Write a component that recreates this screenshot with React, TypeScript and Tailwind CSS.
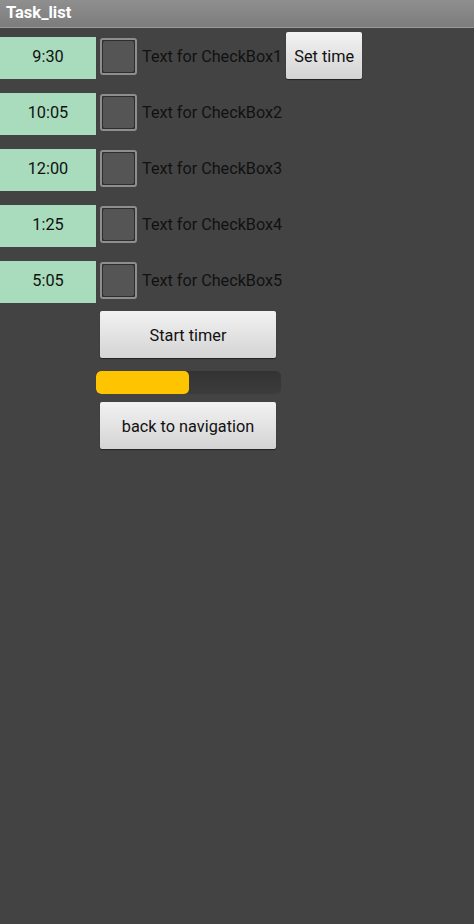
import React from "react";

const times = ["9:30", "10:05", "12:00", "1:25", "5:05"];

function CheckBox() {
  return (
    <div className="w-[37px] h-[37px] shrink-0 rounded-[3px] border-2 border-[#8e8e8e] bg-[#2e2e2e] p-[1px]">
      <div className="w-full h-full rounded-[2px] bg-[#555555]" />
    </div>
  );
}

function GrayButton({ label, className }: { label: string; className: string }) {
  return (
    <div
      className={
        "flex items-center justify-center pt-[3px] rounded-[2px] bg-gradient-to-b from-[#f2f2f2] to-[#d4d4d4] text-[16.3px] text-[#111] shadow-[0_1px_1px_rgba(0,0,0,0.5)] " +
        className
      }
    >
      {label}
    </div>
  );
}

export default function App() {
  return (
    <div
      className="w-[474px] h-[924px] bg-[#434343] flex flex-col"
      style={{ fontFamily: "Roboto, 'Liberation Sans', sans-serif" }}
    >
      <div className="h-[28px] shrink-0 bg-gradient-to-b from-[#8f8f8f] to-[#7c7c7c] border-b border-[#9a9a9a] flex items-center pl-[6px]">
        <span className="text-white font-bold text-[16.5px] leading-none">Task_list</span>
      </div>

      {times.map((t, i) => (
        <div key={t} className="h-[56px] shrink-0 flex items-center">
          <div className="w-[96px] h-[42px] mt-[4px] pb-[2px] bg-[#a8dcbc] flex items-center justify-center text-[16.3px] text-[#111]">
            {t}
          </div>
          <div className="ml-[4px]">
            <CheckBox />
          </div>
          <span className="ml-[5px] mt-[2px] text-[16.2px] text-[#111]">Text for CheckBox{i + 1}</span>
          {i === 0 && <GrayButton label="Set time" className="ml-[4px] w-[76px] h-[47px] mt-[-1px]" />}
        </div>
      ))}

      <GrayButton label="Start timer" className="ml-[100px] mt-[3px] w-[176px] h-[47px]" />

      <div className="ml-[96px] mt-[13px] w-[185px] h-[23px] rounded-[5px] bg-gradient-to-b from-[#333333] to-[#3c3c3c] overflow-hidden flex">
        <div className="w-[93px] h-full bg-[#ffc400] rounded-[5px]" />
      </div>

      <GrayButton label="back to navigation" className="ml-[100px] mt-[8px] w-[176px] h-[47px]" />
    </div>
  );
}
